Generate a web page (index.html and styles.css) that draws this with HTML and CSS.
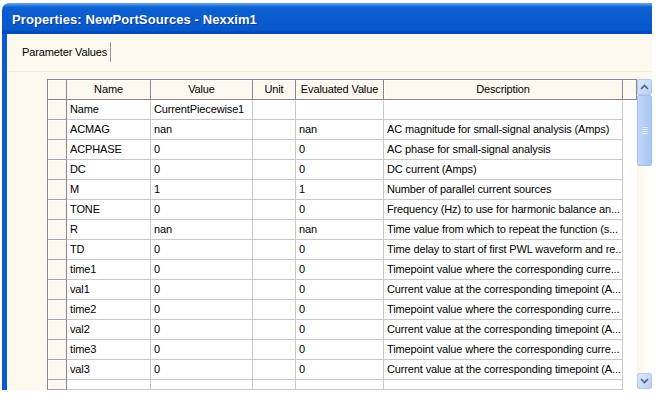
FILE: index.html
```html
<!DOCTYPE html>
<html>
<head>
<meta charset="utf-8">
<link rel="stylesheet" href="styles.css">
</head>
<body>
<div class="window">
  <div class="titlebar"><span class="title">Properties: NewPortSources - Nexxim1</span></div>
  <div class="body">
    <div class="tabs"><span class="tab">Parameter Values</span><span class="tabsep"></span></div>
    <div class="gridwrap">
      <div class="grid">
        <div class="row head">
          <div class="c rh"></div><div class="c">Name</div><div class="c">Value</div><div class="c">Unit</div><div class="c">Evaluated Value</div><div class="c">Description</div><div class="c">&nbsp;</div>
        </div>
        <div class="row"><div class="c rh"></div><div class="c">Name</div><div class="c">CurrentPiecewise1</div><div class="c"></div><div class="c"></div><div class="c"></div><div class="c x"></div></div>
        <div class="row"><div class="c rh"></div><div class="c">ACMAG</div><div class="c">nan</div><div class="c"></div><div class="c">nan</div><div class="c">AC magnitude for small-signal analysis (Amps)</div><div class="c x"></div></div>
        <div class="row"><div class="c rh"></div><div class="c">ACPHASE</div><div class="c">0</div><div class="c"></div><div class="c">0</div><div class="c">AC phase for small-signal analysis</div><div class="c x"></div></div>
        <div class="row"><div class="c rh"></div><div class="c">DC</div><div class="c">0</div><div class="c"></div><div class="c">0</div><div class="c">DC current (Amps)</div><div class="c x"></div></div>
        <div class="row"><div class="c rh"></div><div class="c">M</div><div class="c">1</div><div class="c"></div><div class="c">1</div><div class="c">Number of parallel current sources</div><div class="c x"></div></div>
        <div class="row"><div class="c rh"></div><div class="c">TONE</div><div class="c">0</div><div class="c"></div><div class="c">0</div><div class="c">Frequency (Hz) to use for harmonic balance an...</div><div class="c x"></div></div>
        <div class="row"><div class="c rh"></div><div class="c">R</div><div class="c">nan</div><div class="c"></div><div class="c">nan</div><div class="c">Time value from which to repeat the function (s...</div><div class="c x"></div></div>
        <div class="row"><div class="c rh"></div><div class="c">TD</div><div class="c">0</div><div class="c"></div><div class="c">0</div><div class="c">Time delay to start of first PWL waveform and re...</div><div class="c x"></div></div>
        <div class="row"><div class="c rh"></div><div class="c">time1</div><div class="c">0</div><div class="c"></div><div class="c">0</div><div class="c">Timepoint value where the corresponding curre...</div><div class="c x"></div></div>
        <div class="row"><div class="c rh"></div><div class="c">val1</div><div class="c">0</div><div class="c"></div><div class="c">0</div><div class="c">Current value at the corresponding timepoint (A...</div><div class="c x"></div></div>
        <div class="row"><div class="c rh"></div><div class="c">time2</div><div class="c">0</div><div class="c"></div><div class="c">0</div><div class="c">Timepoint value where the corresponding curre...</div><div class="c x"></div></div>
        <div class="row"><div class="c rh"></div><div class="c">val2</div><div class="c">0</div><div class="c"></div><div class="c">0</div><div class="c">Current value at the corresponding timepoint (A...</div><div class="c x"></div></div>
        <div class="row"><div class="c rh"></div><div class="c">time3</div><div class="c">0</div><div class="c"></div><div class="c">0</div><div class="c">Timepoint value where the corresponding curre...</div><div class="c x"></div></div>
        <div class="row"><div class="c rh"></div><div class="c">val3</div><div class="c">0</div><div class="c"></div><div class="c">0</div><div class="c">Current value at the corresponding timepoint (A...</div><div class="c x"></div></div>
        <div class="row last"><div class="c rh"></div><div class="c"></div><div class="c"></div><div class="c"></div><div class="c"></div><div class="c"></div><div class="c x"></div></div>
      </div>
      <div class="scrollbar">
        <div class="sbtn"><svg width="9" height="6" viewBox="0 0 9 6"><path d="M1 5 L4.5 1.5 L8 5" fill="none" stroke="#4d6185" stroke-width="1.6"/></svg></div>
        <div class="thumb"><span class="grip"></span></div>
        <div class="track"></div>
        <div class="sbtn"><svg width="9" height="6" viewBox="0 0 9 6"><path d="M1 1 L4.5 4.5 L8 1" fill="none" stroke="#4d6185" stroke-width="1.6"/></svg></div>
      </div>
    </div>
  </div>
</div>
</body>
</html>
```

FILE: styles.css
```css
html, body {
  margin: 0;
  padding: 0;
  background: #ffffff;
}
body {
  font-family: "Liberation Sans", Arial, sans-serif;
  font-size: 11px;
  letter-spacing: -0.13px;
  color: #000;
}
.window {
  margin: 3px 0 0 2px;
  width: 650px;
}
.titlebar {
  height: 31px;
  border-radius: 7px 0 0 0;
  background: linear-gradient(#6aa8ec 0, #3d87e0 2px, #0f62d2 4px, #0a5ccf 40%, #0658cb 88%, #0346b8 94%, #0a4bc0 100%);
  display: flex;
  align-items: center;
  padding-left: 10px;
}
.title {
  color: #fff;
  font-weight: bold;
  font-size: 13px;
  letter-spacing: 0.1px;
  position: relative;
  top: 1px;
  text-shadow: 1px 1px 0 #0a3a9a;
}
.body {
  background: #fdf9ee;
  border-left: 5px solid #0a5bd0;
  height: 356px;
  overflow: hidden;
}
.tabs {
  height: 28px;
  padding-top: 9px;
  display: flex;
  align-items: stretch;
  border-bottom: 1px solid #f2eee2;
}
.tab {
  padding: 0 3px 0 15px;
  display: flex;
  align-items: center;
  height: 19px;
  margin-top: -1px;
}
.tabsep {
  width: 1px;
  height: 20px;
  background: #9c9a94;
  box-shadow: 1px 0 0 #fff;
  margin-top: -1px;
}
.gridwrap {
  display: flex;
  margin-top: 7px;
  margin-left: 40px;
}
.grid {
  width: 590px;
  border-top: 1px solid #8e8296;
}
.row {
  display: grid;
  grid-template-columns: 20px 84px 102px 43px 88px 239px 14px;
  height: 20px;
  background: #fff;
}
.row.last {
  height: 10px;
}
.c {
  box-sizing: border-box;
  border-right: 1px solid #c9c9c9;
  border-bottom: 1px solid #c9c9c9;
  padding: 0 3px;
  white-space: nowrap;
  overflow: hidden;
  line-height: 19px;
}
.c.x {
  border-right: none;
  border-bottom: none;
}
.row .rh {
  background: #fdf9ee;
  border-left: 1px solid #8e8296;
  border-right: 1px solid #8e8296;
  border-bottom: 1px solid #a99eb2;
  box-shadow: inset 1px 1px 0 #fff;
}
.head .c {
  background: #fdf9ee;
  text-align: center;
  border-right: 1px solid #8e8296;
  border-bottom: 1px solid #8e8296;
  box-shadow: inset 1px 1px 0 #fff;
}
.head .c.rh {
  border-bottom: 1px solid #8e8296;
}
.scrollbar {
  width: 15px;
  height: 310px;
  display: flex;
  flex-direction: column;
  background: linear-gradient(to right, #fcf6e4, #fffdf6 60%, #ffffff);
}
.sbtn {
  height: 16px;
  box-sizing: border-box;
  border: 1px solid #b4c9ee;
  border-radius: 2px;
  background: linear-gradient(to bottom right, #dbe8fc, #b8d0f7);
  display: flex;
  align-items: center;
  justify-content: center;
}
.thumb {
  height: 71px;
  box-sizing: border-box;
  border: 1px solid #a4bff0;
  border-radius: 2px;
  background: linear-gradient(to right, #c2d6fa, #b4cef7 50%, #aac6f5);
  display: flex;
  align-items: center;
  justify-content: center;
}
.grip {
  width: 6px;
  height: 7px;
  background: repeating-linear-gradient(#e8f0fe 0, #e8f0fe 1px, #a8c2ee 1px, #a8c2ee 2px);
}
.track {
  flex: 1;
}
```
